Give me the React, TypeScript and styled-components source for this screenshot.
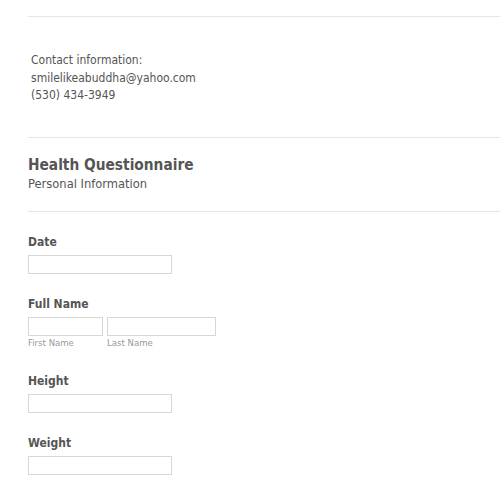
import React from "react";
import styled, { createGlobalStyle } from "styled-components";

const Global = createGlobalStyle`
  html, body { margin: 0; padding: 0; background: #fff; }
  body { font-family: "DejaVu Sans Condensed", "DejaVu Sans", Verdana, sans-serif; color: #555; }
`;

const Page = styled.div`
  padding-left: 28px;
  padding-top: 16px;
`;

const Divider = styled.div`
  height: 1px;
  background: #e6e6e6;
`;

const Contact = styled.div`
  padding: 35px 0 32.5px 3px;
  font-size: 12px;
  line-height: 17.5px;
`;

const Header = styled.div`
  padding: 18px 0 18px;
`;

const Title = styled.h2`
  margin: 0;
  font-size: 15.3px;
  line-height: 18px;
  font-weight: bold;
  color: #555;
`;

const Subtitle = styled.div`
  font-size: 12.8px;
  line-height: 19px;
`;

const Fields = styled.div`
  padding-top: 23px;
  display: flex;
  flex-direction: column;
`;

const Field = styled.div<{ $gap: number }>`
  margin-bottom: ${(p) => p.$gap}px;
`;

const Label = styled.div`
  font-size: 12px;
  font-weight: bold;
  line-height: 14px;
  margin-bottom: 6px;
  color: #555;
`;

const Row = styled.div`
  display: flex;
  gap: 4px;
`;

const Input = styled.div<{ $w: number }>`
  box-sizing: border-box;
  width: ${(p) => p.$w}px;
  height: 19px;
  border: 1px solid #d6d6d6;
  background: #fff;
`;

const Sub = styled.div`
  font-size: 9.5px;
  line-height: 12px;
  color: #999;
  margin-top: 1px;
`;

const Col = styled.div``;

export default function App() {
  return (
    <>
      <Global />
      <Page>
        <Divider />
        <Contact>
          <div>Contact information:</div>
          <div>smilelikeabuddha@yahoo.com</div>
          <div>(530) 434-3949</div>
        </Contact>
        <Divider />
        <Header>
          <Title>Health Questionnaire</Title>
          <Subtitle>Personal Information</Subtitle>
        </Header>
        <Divider />
        <Fields>
          <Field $gap={23}>
            <Label>Date</Label>
            <Input $w={144} />
          </Field>
          <Field $gap={25}>
            <Label>Full Name</Label>
            <Row>
              <Col>
                <Input $w={75} />
                <Sub>First Name</Sub>
              </Col>
              <Col>
                <Input $w={109} />
                <Sub>Last Name</Sub>
              </Col>
            </Row>
          </Field>
          <Field $gap={23}>
            <Label>Height</Label>
            <Input $w={144} />
          </Field>
          <Field $gap={0}>
            <Label>Weight</Label>
            <Input $w={144} />
          </Field>
        </Fields>
      </Page>
    </>
  );
}
